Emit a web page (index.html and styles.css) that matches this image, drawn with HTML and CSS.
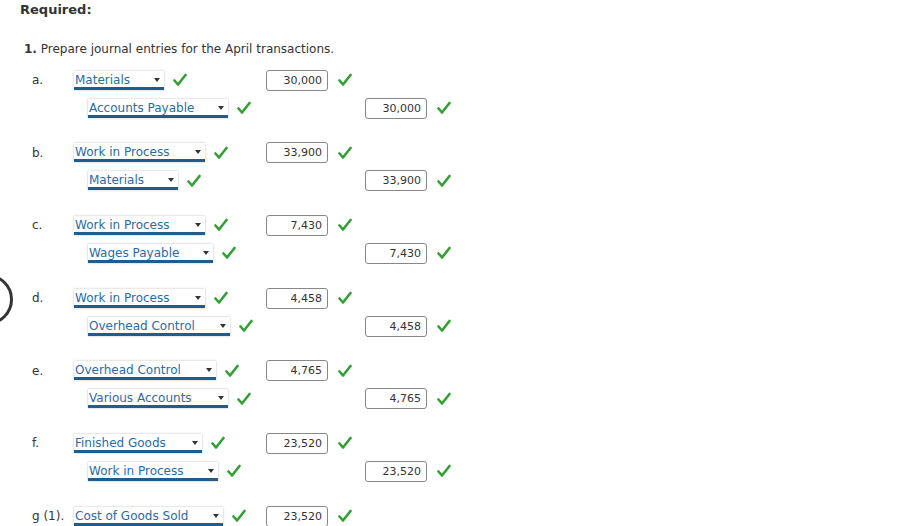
FILE: index.html
```html
<!DOCTYPE html>
<html lang="en">

<head>
    <meta charset="UTF-8" />
    <meta name="viewport" content="width=device-width, initial-scale=1.0" />
    <title>Required</title>
    <link rel="stylesheet" href="styles.css">
</head>

<body>
    <!-- side nav circle, cut by the window edge -->
    <div class="nav-circle"></div>

    <div class="page">
        <h3 class="required">Required:</h3>

        <p class="question"><b>1.</b> Prepare journal entries for the April transactions.</p>

        <div class="entries">
            <!-- a -->
            <div class="entry">
                <div class="row">
                    <span class="label">a.</span>
                    <div class="account">
                        <span class="pick" style="width: 90px">Materials</span><span class="check"></span>
                    </div>
                    <div class="debit"><span class="amount">30,000</span><span class="check"></span></div>
                    <div class="credit"></div>
                </div>
                <div class="row">
                    <span class="label"></span>
                    <div class="account indent">
                        <span class="pick" style="width: 140px">Accounts Payable</span><span class="check"></span>
                    </div>
                    <div class="debit"></div>
                    <div class="credit"><span class="amount">30,000</span><span class="check"></span></div>
                </div>
            </div>

            <!-- b -->
            <div class="entry">
                <div class="row">
                    <span class="label">b.</span>
                    <div class="account">
                        <span class="pick" style="width: 131px">Work in Process</span><span class="check"></span>
                    </div>
                    <div class="debit"><span class="amount">33,900</span><span class="check"></span></div>
                    <div class="credit"></div>
                </div>
                <div class="row">
                    <span class="label"></span>
                    <div class="account indent">
                        <span class="pick" style="width: 90px">Materials</span><span class="check"></span>
                    </div>
                    <div class="debit"></div>
                    <div class="credit"><span class="amount">33,900</span><span class="check"></span></div>
                </div>
            </div>

            <!-- c -->
            <div class="entry">
                <div class="row">
                    <span class="label">c.</span>
                    <div class="account">
                        <span class="pick" style="width: 131px">Work in Process</span><span class="check"></span>
                    </div>
                    <div class="debit"><span class="amount">7,430</span><span class="check"></span></div>
                    <div class="credit"></div>
                </div>
                <div class="row">
                    <span class="label"></span>
                    <div class="account indent">
                        <span class="pick" style="width: 125px">Wages Payable</span><span class="check"></span>
                    </div>
                    <div class="debit"></div>
                    <div class="credit"><span class="amount">7,430</span><span class="check"></span></div>
                </div>
            </div>

            <!-- d -->
            <div class="entry">
                <div class="row">
                    <span class="label">d.</span>
                    <div class="account">
                        <span class="pick" style="width: 131px">Work in Process</span><span class="check"></span>
                    </div>
                    <div class="debit"><span class="amount">4,458</span><span class="check"></span></div>
                    <div class="credit"></div>
                </div>
                <div class="row">
                    <span class="label"></span>
                    <div class="account indent">
                        <span class="pick" style="width: 142px">Overhead Control</span><span class="check"></span>
                    </div>
                    <div class="debit"></div>
                    <div class="credit"><span class="amount">4,458</span><span class="check"></span></div>
                </div>
            </div>

            <!-- e -->
            <div class="entry">
                <div class="row">
                    <span class="label">e.</span>
                    <div class="account">
                        <span class="pick" style="width: 142px">Overhead Control</span><span class="check"></span>
                    </div>
                    <div class="debit"><span class="amount">4,765</span><span class="check"></span></div>
                    <div class="credit"></div>
                </div>
                <div class="row">
                    <span class="label"></span>
                    <div class="account indent">
                        <span class="pick" style="width: 140px">Various Accounts</span><span class="check"></span>
                    </div>
                    <div class="debit"></div>
                    <div class="credit"><span class="amount">4,765</span><span class="check"></span></div>
                </div>
            </div>

            <!-- f -->
            <div class="entry">
                <div class="row">
                    <span class="label">f.</span>
                    <div class="account">
                        <span class="pick" style="width: 128px">Finished Goods</span><span class="check"></span>
                    </div>
                    <div class="debit"><span class="amount">23,520</span><span class="check"></span></div>
                    <div class="credit"></div>
                </div>
                <div class="row">
                    <span class="label"></span>
                    <div class="account indent">
                        <span class="pick" style="width: 130px">Work in Process</span><span class="check"></span>
                    </div>
                    <div class="debit"></div>
                    <div class="credit"><span class="amount">23,520</span><span class="check"></span></div>
                </div>
            </div>

            <!-- g (1) -->
            <div class="entry">
                <div class="row">
                    <span class="label">g (1).</span>
                    <div class="account">
                        <span class="pick" style="width: 149px">Cost of Goods Sold</span><span class="check"></span>
                    </div>
                    <div class="debit"><span class="amount">23,520</span><span class="check"></span></div>
                    <div class="credit"></div>
                </div>
            </div>
        </div>
    </div>
</body>

</html>
```

FILE: styles.css
```css
html,
body {
    height: 100%;
    margin: 0;
    font-family: Verdana, "DejaVu Sans", sans-serif;
    color: #333;
    overflow: hidden;
    background-color: white;
}

.nav-circle {
    position: absolute;
    left: -38px;
    top: 274px;
    width: 45px;
    height: 45px;
    border: 3px solid #333;
    border-radius: 50%;
}

.page {
    padding: 0 0 0 20px;
}

.required {
    margin: 0;
    padding-top: 1px;
    font-size: 13px;
    font-weight: bold;
    line-height: 18px;
}

.question {
    margin: 22px 0 0 4px;
    font-size: 12px;
    line-height: 16px;
}

.entries {
    margin-top: 9px;
    padding-left: 12px;
}

.entry {
    margin-bottom: 16.7px;
}

.row {
    display: grid;
    grid-template-columns: 42px 192px 99px 1fr;
    align-items: center;
    height: 28px;
}

.label {
    font-size: 12px;
    white-space: nowrap;
}

.account {
    display: flex;
    align-items: center;
}

.account.indent {
    padding-left: 14px;
}

.pick {
    position: relative;
    box-sizing: border-box;
    height: 19px;
    padding: 2px 14px 0 1px;
    font-size: 12px;
    line-height: 14px;
    color: #2a6aa8;
    background-color: white;
    border-bottom: 3px solid #1f5d8e;
    box-shadow: 0 0 2px #bbb;
    white-space: nowrap;
}

.pick::after {
    content: "";
    position: absolute;
    right: 4px;
    top: 7px;
    border-left: 3.5px solid transparent;
    border-right: 3.5px solid transparent;
    border-top: 4px solid #333;
}

.check {
    display: inline-block;
    width: 14px;
    height: 14px;
    margin-left: 9px;
    background: no-repeat center / 14px 14px url("data:image/svg+xml,%3Csvg xmlns='http://www.w3.org/2000/svg' viewBox='0 0 14 14'%3E%3Cpath d='M1.5 7.5 L5 11.5 L12.5 2' fill='none' stroke='%2333a033' stroke-width='2.6' stroke-linecap='round' stroke-linejoin='round'/%3E%3C/svg%3E");
}

.debit,
.credit {
    display: flex;
    align-items: center;
}

.amount {
    box-sizing: border-box;
    width: 62px;
    height: 21px;
    padding-right: 5px;
    border: 1px solid #888;
    border-radius: 3px;
    text-align: right;
    font-size: 11px;
    line-height: 19px;
    color: #333;
}

.amount + .check {
    margin-left: 10px;
}
```
